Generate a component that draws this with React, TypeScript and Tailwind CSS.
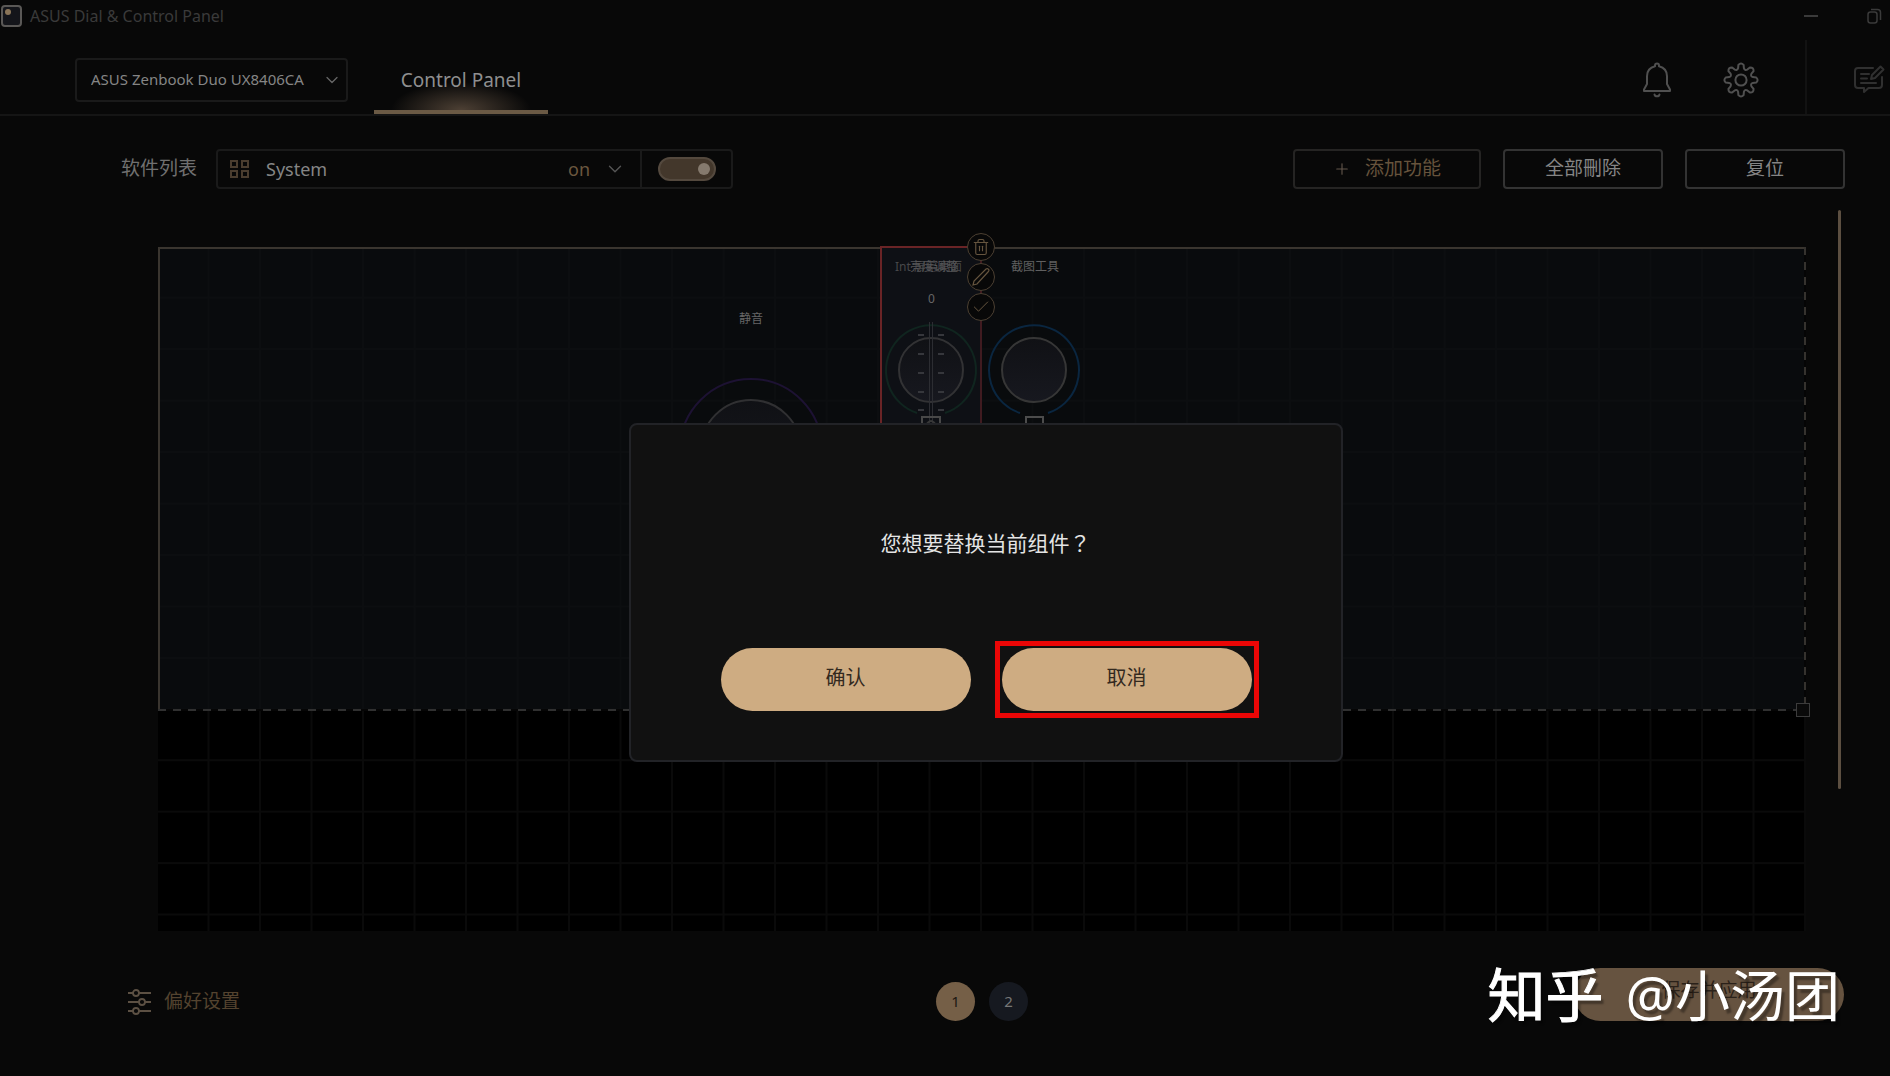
import React from "react";
import { ChevronDown, Plus, Trash2, Check } from "lucide-react";

const iconBtn = "flex items-center justify-center";

function GearIcon() {
  const pts: string[] = [];
  for (let i = 0; i < 8; i++) {
    const c = (i * Math.PI) / 4 - Math.PI / 2;
    const p = (r: number, a: number) =>
      `${(18 + r * Math.cos(c + a)).toFixed(2)} ${(18 + r * Math.sin(c + a)).toFixed(2)}`;
    pts.push(`${i === 0 ? "M" : "L"}${p(12.2, -0.24)} L${p(15.4, -0.17)} Q${p(18, 0)} ${p(15.4, 0.17)} L${p(12.2, 0.24)} Q${p(10, 0.39)} ${p(12.2, 0.545)}`);
  }
  return (
    <svg viewBox="0 0 36 36" className="size-9" fill="none" stroke="currentColor" strokeWidth="2" strokeLinejoin="round">
      <path d={pts.join(" ") + "Z"} />
      <circle cx="18" cy="18" r="5.6" />
    </svg>
  );
}

function BellIcon() {
  return (
    <svg viewBox="0 0 30 36" className="h-9 w-[30px]" fill="none" stroke="currentColor" strokeWidth="2" strokeLinejoin="round" strokeLinecap="round">
      <path d="M15 1.5a2 2 0 0 1 2 2v.8c5 1.2 8 5 8 10V22l3 5.500v1.500H2v-1.500L5 22v-7.700c0-5 3-8.800 8-10v-.8a2 2 0 0 1 2-2Z" />
      <path d="M12.5 32.5c.4 2.300 4.600 2.300 5 0" />
    </svg>
  );
}

function FeedbackIcon() {
  return (
    <svg viewBox="0 0 32 30" className="h-[30px] w-8" fill="none" stroke="currentColor" strokeWidth="2" strokeLinejoin="round" strokeLinecap="round">
      <path d="M20 4H5a3 3 0 0 0-3 3v14a3 3 0 0 0 3 3h6v4l4.500-4H26a3 3 0 0 0 3-3v-8" />
      <path d="M8 10h8M8 14.500h6M8 19h15" />
      <path d="m18 15 1-4 8.500-8.500 3 3L22 14Z" />
    </svg>
  );
}

function TitleBar() {
  return (
    <div className="flex h-8 items-center pl-px pr-2 text-[#3a3a3a]">
      <span className="flex h-[22px] w-[21px] rounded border-2 border-[#5a5856] bg-[#14151a] p-0.5">
        <span className="size-1.5 rounded-full bg-[#8b7558]" />
      </span>
      <h1 className="ml-2 flex-1 text-base">ASUS Dial &amp; Control Panel</h1>
      <button aria-label="Minimize" className="mr-12">
        <svg viewBox="0 0 14 14" className="size-3.5" stroke="currentColor" strokeWidth="2"><path d="M0 7h14" /></svg>
      </button>
      <button aria-label="Restore">
        <svg viewBox="0 0 16 16" className="size-4" fill="none" stroke="currentColor" strokeWidth="1.500">
          <rect x="2" y="4" width="9" height="11" rx="2.500" />
          <path d="M5 1.500h6.500a3 3 0 0 1 3 3V12" />
        </svg>
      </button>
    </div>
  );
}

function Header() {
  return (
    <header className="flex h-21 items-stretch border-b-2 border-[#151515] pl-[75px]">
      <div className="relative mt-[26px] h-11 w-[273px]">
        <select aria-label="Device" className="size-full appearance-none rounded border-2 border-[#1a1a1a] bg-transparent pb-0.5 pl-3.5 text-[15px] text-[#858585]">
          <option>ASUS Zenbook Duo UX8406CA</option>
        </select>
        <ChevronDown strokeWidth={1.5} className="pointer-events-none absolute right-1.5 top-3 size-5 text-[#666]" />
      </div>
      <nav className="ml-[26px] flex">
        <a href="#panel" className="flex w-[174px] justify-center border-b-4 border-[#6b5a45] bg-[radial-gradient(ellipse_70px_28px_at_50%_100%,#4d4034,transparent)] pt-8 text-[19px] leading-8 text-[#8f8f8f]">
          Control Panel
        </a>
      </nav>
      <div className="ml-auto flex items-center pt-[13px] text-[#505050]">
        <button aria-label="Notifications" className={iconBtn}><BellIcon /></button>
        <button aria-label="Settings" className="ml-[51px] flex items-center justify-center"><GearIcon /></button>
      </div>
      <div className="ml-[46px] mt-2 flex items-center border-l-2 border-[#121212] pl-[46px] pr-[5px] pt-1 text-[#303030]">
        <button aria-label="Feedback" className={iconBtn}><FeedbackIcon /></button>
      </div>
    </header>
  );
}

function Toolbar() {
  return (
    <div className="flex h-10 items-stretch text-lg">
      <label htmlFor="app" className="mr-[19px] self-center text-[19px] text-[#707070]">软件列表</label>
      <div className="relative w-[426px]">
        <select id="app" className="size-full appearance-none rounded-l border-2 border-[#1a1a1a] bg-transparent pl-12 text-lg text-[#858585]">
          <option>System</option>
        </select>
        <svg viewBox="0 0 20 20" className="pointer-events-none absolute left-3.5 top-2.5 size-5 text-[#4a3d2f]" fill="none" stroke="currentColor" strokeWidth="2">
          <rect x="1" y="2" width="6" height="6" /><rect x="12" y="2" width="6" height="6" />
          <rect x="1" y="12" width="6" height="6" /><rect x="12" y="12" width="6" height="6" />
        </svg>
        <span className="pointer-events-none absolute inset-y-0 right-4 flex items-center gap-3.5 text-[#6b573f]">
          on <ChevronDown strokeWidth={1.5} className="size-[22px] text-[#555]" />
        </span>
      </div>
      <div className="flex w-[91px] items-center justify-center rounded-r border-2 border-l-0 border-[#1a1a1a]">
        <label className="flex h-6 w-[58px] items-center justify-end rounded-full border-2 border-[#54493e] bg-[#43372b] pr-1">
          <input type="checkbox" defaultChecked aria-label="System on" className="size-3 appearance-none rounded-full bg-[#857a6e]" />
        </label>
      </div>
      <div className="ml-auto flex gap-[22px]">
        <button className="flex w-[188px] items-center justify-center gap-3.5 rounded border-2 border-[#252423] text-[19px] text-[#66533c]">
          <Plus strokeWidth={1.5} className="size-[18px] text-[#62574b]" />添加功能
        </button>
        <button className="w-[160px] rounded border-2 border-[#333] text-[19px] text-[#858585]">全部刪除</button>
        <button className="w-[160px] rounded border-2 border-[#333] text-[19px] text-[#858585]">复位</button>
      </div>
    </div>
  );
}

/* Widgets sit at free positions on the control surface. */
function Widgets() {
  return (
    <svg width="500" height="463" viewBox="0 0 500 463" fill="none" className="absolute left-[501px] top-0 overflow-visible">
      <defs>
        <linearGradient id="knob" x1="0" y1="0" x2="0" y2="1">
          <stop offset="0" stopColor="#101115" /><stop offset="1" stopColor="#17181f" />
        </linearGradient>
      </defs>
      <circle cx="92" cy="203" r="71" stroke="#1d1233" strokeWidth="2" />
      <circle cx="92" cy="203" r="50" fill="url(#knob)" stroke="#303032" strokeWidth="2" />
      <rect x="222" y="0" width="100" height="300" fill="#0e1015" />
      <path d="M322 0V300" stroke="#401b20" strokeWidth="2" />
      <path d="M222 300V0H322" stroke="#6a2426" strokeWidth="2" />
      <path d="M258 166a45 45 0 1 1 28 0" stroke="#10251f" strokeWidth="2" />
      <circle cx="272" cy="123" r="32" fill="url(#knob)" stroke="#323234" strokeWidth="2" />
      <path d="M270.500 75V190M273.500 75V190" stroke="#2c2d32" />
      <path d="M259 88h6M279 88h6M259 107h6M279 107h6M259 126h6M279 126h6M259 145h6M279 145h6M259 163h6M279 163h6" stroke="#36373c" strokeWidth="2" />
      <path d="M263 185V170h18v15" stroke="#484848" strokeWidth="2" />
      <path d="M266 180q6-12 12 0" stroke="#383838" strokeWidth="2" />
      <path d="M361 166a45 45 0 1 1 28 0" stroke="#0a2640" strokeWidth="2" />
      <circle cx="375" cy="123" r="32" fill="url(#knob)" stroke="#363636" strokeWidth="2" />
      <path d="M367 180V170h17v10" stroke="#4c4c4c" strokeWidth="2" />
    </svg>
  );
}

function Pencil() {
  return (
    <svg viewBox="0 0 20 20" className="size-5" fill="none" stroke="currentColor" strokeWidth="1.200">
      <path d="M2 18l1-4L15 2q2-1 3 1 0 1-1 2L6 17Z" />
    </svg>
  );
}

const tool = "flex size-7 items-center justify-center rounded-full border border-[#4c4032] bg-[#080808]";

function Canvas() {
  return (
    <main id="panel" className="relative h-[684px] flex-1 bg-black bg-[linear-gradient(to_left,#0a0a0a_2px,transparent_2px),linear-gradient(to_top,#0a0a0a_2px,transparent_2px)] bg-[length:3.125%_7.519%]">
      <div className="relative h-[464px] bg-[#090b0d] bg-[linear-gradient(to_left,#0c0e10_2px,transparent_2px),linear-gradient(to_top,#0c0e10_2px,transparent_2px)] bg-[length:3.125%_11.1%]">
        <div className="pointer-events-none absolute inset-0 border-l-2 border-t-2 border-[#3a352f]" />
        <div className="absolute inset-x-0 bottom-0 h-0.5 bg-[repeating-linear-gradient(to_right,#303030_0_8px,#050505_8px_15px)]" />
        <div className="absolute inset-y-0 right-0 w-0.5 bg-[repeating-linear-gradient(to_bottom,#35322e_0_8px,#050505_8px_15px)]" />
        <Widgets />
        <span className="absolute left-[581px] top-16 text-xs leading-4 text-[#666]">静音</span>
        <span className="absolute left-[737px] top-3 w-[74px] whitespace-nowrap text-xs leading-4 text-[#48484a]">Int 屏幕桌面</span>
        <span className="absolute left-[752px] top-3 text-xs leading-4 text-[#555557]">亮度调整</span>
        <span className="absolute left-[770px] top-11 text-xs leading-4 text-[#666]">0</span>
        <span className="absolute left-[853px] top-3 text-xs leading-4 text-[#606060]">截图工具</span>
        <div className="absolute left-[809px] -top-3.5 flex flex-col gap-0.5 text-[#66553f]">
          <button aria-label="Delete" className={tool}><Trash2 strokeWidth={1.5} className="size-[18px]" /></button>
          <button aria-label="Edit" className={tool}><Pencil /></button>
          <button aria-label="Apply" className={tool}><Check strokeWidth={1.2} className="size-5" /></button>
        </div>
        <span className="absolute -bottom-1.5 -right-1 size-3.5 border border-[#3c3c3c] bg-[#0a0a0a]" />
      </div>
    </main>
  );
}

function Footer() {
  return (
    <footer className="grid grid-cols-[1fr_auto_1fr] items-center pl-32 pr-[46px]">
      <button className="flex items-center gap-3 justify-self-start text-[19px] text-[#54432f]">
        <svg viewBox="0 0 24 26" className="h-[26px] w-6 text-[#5c5043]" fill="none" stroke="currentColor" strokeWidth="1.800">
          <path d="M0 4h5M11 4h12M0 13h11M17 13h6M0 22h5M11 22h12" />
          <circle cx="8" cy="4" r="3" /><circle cx="14" cy="13" r="3" /><circle cx="8" cy="22" r="3" />
        </svg>
        偏好设置
      </button>
      <div className="-ml-2 flex gap-3.5 text-[15px]">
        <button className="size-[39px] rounded-full bg-[#755f47] text-[#1c1712]">1</button>
        <button className="size-[39px] rounded-full bg-[#161920] text-[#777]">2</button>
      </div>
      <div className="relative -mt-3.5 justify-self-end">
        <button className="h-[53px] w-[270px] rounded-full bg-[#665340] pb-2 text-[19px] text-[#2a2119]">保存并应用</button>
        <div className="pointer-events-none absolute inset-y-0 right-1 flex items-center gap-[22px] whitespace-nowrap text-[55px] leading-none text-white [text-shadow:3px_4px_2px_rgba(0,0,0,0.35)]">
          <span className="text-[58px] [-webkit-text-stroke:1px_white]">知乎</span>
          <span>@小汤团</span>
        </div>
      </div>
    </footer>
  );
}

function ConfirmDialog() {
  return (
    <div className="fixed inset-0 flex items-start justify-center pl-[81px] pt-[423px]">
      <div role="dialog" aria-modal="true" aria-labelledby="question" className="w-[714px] rounded-lg border-2 border-[#222327] bg-[#111] pb-[42px] pt-[101px] text-center">
        <p id="question" className="text-[21px] leading-8 text-[#e4e4e4]">
          您想要替换当前组件<span className="font-['Noto_Sans_CJK_TC',sans-serif]">？</span>
        </p>
        <div className="mt-[82px] flex items-center justify-center gap-6 pl-2 text-[20px] text-[#33291e]">
          <button className="h-[63px] w-[250px] rounded-full bg-[#ceac82] pb-1">确认</button>
          <div className="border-[5px] border-[#ea0606] p-0.5">
            <button className="block h-[63px] w-[250px] rounded-full bg-[#ceac82] pb-1">取消</button>
          </div>
        </div>
      </div>
    </div>
  );
}

export default function App() {
  return (
    <div className="flex min-h-screen flex-col overflow-hidden bg-[#080808] font-['Noto_Sans','Noto_Sans_CJK_SC',sans-serif]">
      <TitleBar />
      <Header />
      <div className="pl-[121px] pr-[45px] pt-[33px]"><Toolbar /></div>
      <div className="flex pl-[158px] pr-[49px] pt-[21px]">
        <div className="flex flex-1 pt-[37px]"><Canvas /></div>
        <div className="ml-8 h-[579px] w-[3px] rounded bg-[#5c4f41]" />
      </div>
      <div className="pt-[51px]"><Footer /></div>
      <ConfirmDialog />
    </div>
  );
}
